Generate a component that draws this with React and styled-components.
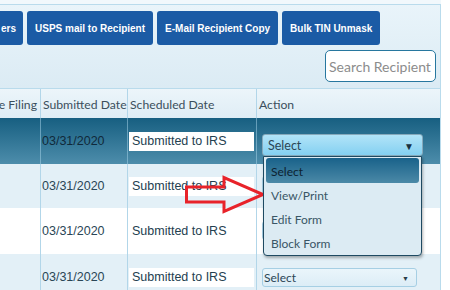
import React from "react";
import styled, { createGlobalStyle } from "styled-components";

const GlobalStyle = createGlobalStyle`
  body {
    margin: 0;
    background: #ffffff;
    font-family: "Lato", "Liberation Sans", sans-serif;
    overflow: hidden;
  }
`;

// covered rows sit under the open menu, so their select shows no label
const rows = [
  { bg: "active", open: true },
  { bg: "tint", covered: true },
  { bg: "white", covered: true },
  { bg: "tint" },
];

function App() {
  return (
    <>
      <GlobalStyle />
      <Page>
        <TopStrip />
        <Panel>
          <ButtonRow>
            <ActionButton $cut>ers</ActionButton>
            <ActionButton>USPS mail to Recipient</ActionButton>
            <ActionButton>E-Mail Recipient Copy</ActionButton>
            <ActionButton>Bulk TIN Unmask</ActionButton>
          </ButtonRow>
          <SearchRow>
            <SearchInput placeholder="Search Recipient" />
          </SearchRow>
        </Panel>

        <HeaderRow>
          <HeadCell $clip>Late Filing</HeadCell>
          <HeadCell>Submitted Date</HeadCell>
          <HeadCell>Scheduled Date</HeadCell>
          <HeadCell>Action</HeadCell>
        </HeaderRow>

        {rows.map((r, i) => (
          <Row key={i} $bg={r.bg} $h={i === 1 ? 44 : 46}>
            <Cell $bg={r.bg} />
            <Cell $bg={r.bg}>
              <DateText $dark={r.bg === "active"}>03/31/2020</DateText>
            </Cell>
            <Cell $bg={r.bg}>
              <StatusBox>Submitted to IRS</StatusBox>
            </Cell>
            <Cell $bg={r.bg}>
              {r.open ? (
                <SelectWrap>
                  <OpenSelect>
                    <span>Select</span>
                    <Caret>▼</Caret>
                  </OpenSelect>
                  <Menu>
                    <MenuItem $active>Select</MenuItem>
                    <MenuItem>View/Print</MenuItem>
                    <MenuItem>Edit Form</MenuItem>
                    <MenuItem>Block Form</MenuItem>
                  </Menu>
                </SelectWrap>
              ) : (
                <ClosedSelect $shift={r.covered ? -2 : 1}>
                  {!r.covered && (
                    <>
                      <span>Select</span>
                      <SmallCaret>▼</SmallCaret>
                    </>
                  )}
                </ClosedSelect>
              )}
            </Cell>
          </Row>
        ))}

        <Arrow width="84" height="42" viewBox="0 0 84 42">
          <polygon
            points="3.5,13 41,13 41,3.5 80,20.5 41,37.5 41,28 3.5,28"
            fill="none"
            stroke="#e8232a"
            strokeWidth="3"
            strokeLinejoin="miter"
          />
        </Arrow>
      </Page>
    </>
  );
}

export default App;

const Page = styled.div`
  position: relative;
  width: 441px;
  height: 290px;
  overflow: hidden;
`;

const TopStrip = styled.div`
  height: 4px;
  background: #f1f8fc;
`;

const Panel = styled.div`
  height: 85px;
  box-sizing: border-box;
  border-top: 1px solid #b9dbec;
  border-right: 1px solid #b9dbec;
  border-bottom: 1px solid #b9dbec;
  background: linear-gradient(#e9f4fa, #dbebf4);
  display: flex;
  flex-direction: column;
`;

const ButtonRow = styled.div`
  display: flex;
  gap: 4px;
  margin-top: 6px;
  margin-left: -19px;
`;

const ActionButton = styled.div`
  height: 34px;
  display: flex;
  align-items: center;
  justify-content: center;
  padding: ${(p) => (p.$cut ? "0 7px 0 20px" : "0 8px")};
  background: #1b5ba5;
  border-radius: 3px;
  color: #ffffff;
  font-family: "Liberation Sans", sans-serif;
  font-weight: 700;
  font-size: 10px;
  white-space: nowrap;
`;

const SearchRow = styled.div`
  display: flex;
  justify-content: flex-end;
  padding: 5px 4px 0 0;
`;

const SearchInput = styled.input`
  width: 111px;
  height: 32px;
  box-sizing: border-box;
  border: 1px solid #27779f;
  border-radius: 5px;
  background: #ffffff;
  padding: 0 3px;
  font-family: "Lato", sans-serif;
  font-size: 14px;
  outline: none;

  &::placeholder {
    color: #8c8c8c;
  }
`;

const grid = `
  display: grid;
  grid-template-columns: 40px 87px 129px 185px;
`;

const HeaderRow = styled.div`
  ${grid};
  height: 29px;
  background: linear-gradient(#ecf5fa, #dfedf5);
  border-right: 1px solid #b9dbec;
  box-sizing: border-box;
`;

const HeadCell = styled.div`
  display: flex;
  align-items: center;
  justify-content: ${(p) => (p.$clip ? "flex-end" : "flex-start")};
  overflow: hidden;
  white-space: nowrap;
  padding: ${(p) => (p.$clip ? "2px 3px 0 0" : "2px 0 0 2px")};
  border-left: ${(p) => (p.$clip ? "none" : "1px solid #b2d6e9")};
  font-size: 12.2px;
  color: #3b4f5c;
`;

const rowBg = {
  active: "linear-gradient(#175f81, #4d8dab)",
  tint: "#e3f0f7",
  white: "#ffffff",
};

const Row = styled.div`
  ${grid};
  height: ${(p) => p.$h}px;
  background: ${(p) => rowBg[p.$bg]};
  border-right: 1px solid #b9dbec;
  box-sizing: border-box;
`;

const Cell = styled.div`
  display: flex;
  align-items: center;
  border-left: 1px solid
    ${(p) => (p.$bg === "active" ? "rgba(160, 205, 228, 0.55)" : "#b2d6e9")};

  &:first-child {
    border-left: none;
  }
`;

const DateText = styled.span`
  padding-left: 1px;
  font-family: "Liberation Sans", sans-serif;
  font-size: 12.5px;
  color: ${(p) => (p.$dark ? "#10293a" : "#2a4656")};
`;

const StatusBox = styled.div`
  width: 125px;
  height: 19px;
  margin-left: 1px;
  background: #ffffff;
  display: flex;
  align-items: center;
  padding-left: 3px;
  box-sizing: border-box;
  font-family: "Liberation Sans", sans-serif;
  font-size: 12.5px;
  color: #23404f;
  white-space: nowrap;
`;

const SelectWrap = styled.div`
  position: relative;
  margin: 8px 0 0 5px;
`;

const OpenSelect = styled.div`
  width: 161px;
  height: 22px;
  box-sizing: border-box;
  border: 1px solid #86a9bb;
  border-radius: 3px;
  background: linear-gradient(#b2e4f8, #84d0f1);
  display: flex;
  align-items: center;
  justify-content: space-between;
  padding: 1px 8px 0 5px;
  font-size: 12.5px;
  color: #2b4656;
`;

const Caret = styled.span`
  font-size: 10px;
  color: #17303f;
`;

const Menu = styled.div`
  position: absolute;
  top: 22px;
  left: 1px;
  width: 159px;
  height: 100px;
  box-sizing: border-box;
  padding: 1px 2px 0;
  background: #dcebf3;
  border: 1px solid #1e4a62;
  border-radius: 0 0 4px 4px;
  box-shadow: 1px 2px 3px rgba(0, 0, 0, 0.3);
  z-index: 3;
`;

const MenuItem = styled.div`
  height: ${(p) => (p.$active ? 25 : 24)}px;
  display: flex;
  align-items: center;
  padding: 1px 0 0 5px;
  box-sizing: border-box;
  border-radius: 3px;
  font-size: 12px;
  color: ${(p) => (p.$active ? "#0d2231" : "#395666")};
  background: ${(p) =>
    p.$active ? "linear-gradient(#19628a, #4b89a7)" : "transparent"};
`;

const ClosedSelect = styled.div`
  width: 155px;
  height: 19px;
  margin: ${(p) => p.$shift}px 0 0 5px;
  box-sizing: border-box;
  border: 1px solid #a6cfe4;
  border-radius: 3px;
  background: linear-gradient(#eaf5fb, #dcedf6);
  display: flex;
  align-items: center;
  justify-content: space-between;
  padding: 0 7px 0 1px;
  font-size: 12px;
  color: #2b4656;
`;

const SmallCaret = styled.span`
  font-size: 7px;
  color: #2a3c48;
`;

const Arrow = styled.svg`
  position: absolute;
  left: 183px;
  top: 174px;
  pointer-events: none;
  z-index: 2;
`;
